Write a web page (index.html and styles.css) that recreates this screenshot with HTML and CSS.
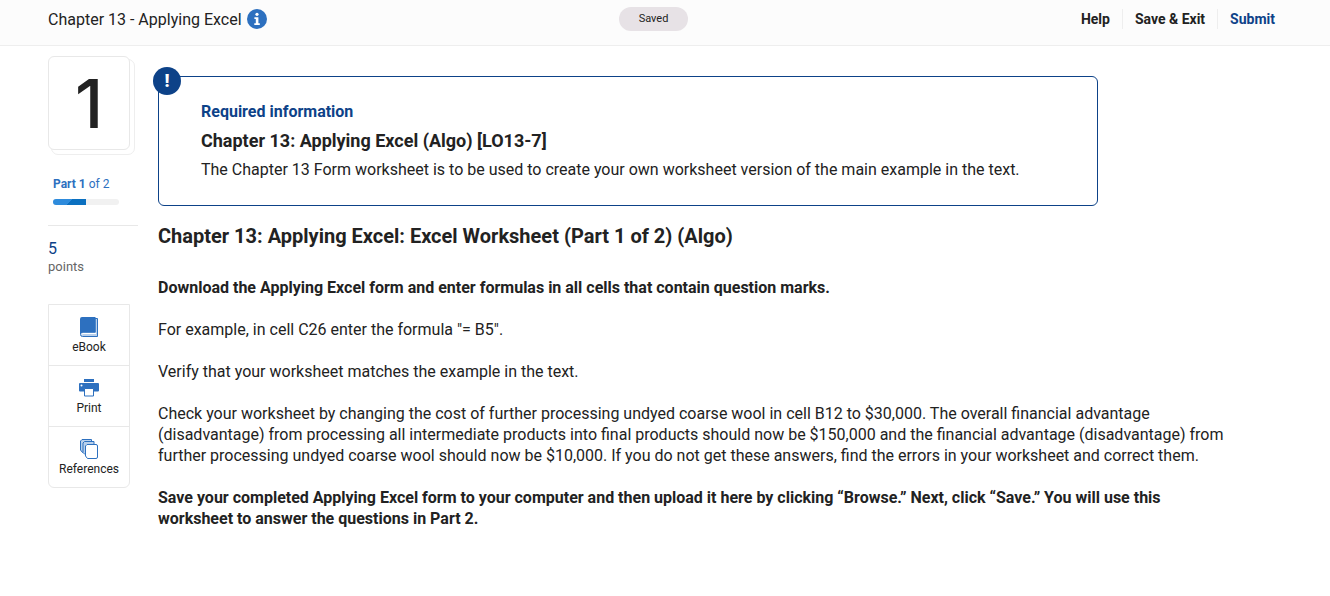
FILE: index.html
```html
<!DOCTYPE html>
<html lang="en">
<head>
  <meta charset="UTF-8">
  <meta name="viewport" content="width=device-width, initial-scale=1">
  <title>Chapter 13 - Applying Excel</title>
  <link rel="stylesheet" href="styles.css">
</head>
<body>

<header class="topbar">
  <div class="topbar-title">
    <span>Chapter 13 - Applying Excel</span>
    <button type="button" class="info-btn" aria-label="Assignment information">
      <svg width="20" height="20" viewBox="0 0 20 20" aria-hidden="true">
        <circle cx="10" cy="10" r="10" fill="#2d70bf"/>
        <circle cx="10" cy="5.3" r="1.6" fill="#fff"/>
        <path d="M7.4 8.2h4v6h1.4v1.8H7.3v-1.800h1.500V10H7.400z" fill="#fff"/>
      </svg>
    </button>
  </div>
  <div class="status">Saved</div>
  <nav class="topbar-actions">
    <button type="button">Help</button>
    <button type="button">Save &amp; Exit</button>
    <button type="button" class="submit">Submit</button>
  </nav>
</header>

<div class="page">
  <aside class="sidebar">
    <div class="question-card"><span class="question-number">1</span></div>

    <div class="part">
      <div class="part-label"><b>Part 1</b> of 2</div>
      <div class="progress"><div class="progress-fill"></div></div>
    </div>

    <div class="points">
      <div class="points-value">5</div>
      <div class="points-label">points</div>
    </div>

    <div class="tools">
      <button type="button">
        <svg width="20" height="20" viewBox="0 0 20 20" aria-hidden="true">
          <path d="M16 1.500h2.500v18H3.500Q1.500 19.500 1.500 17.500V15H16z" fill="#b9d0eb" stroke="#2d70bf"/>
          <path d="M3 0H16.500V15.500H4Q2.500 15.500 1 17V2Q1 0 3 0z" fill="#2d70bf"/>
          <path d="M3 17.500Q3 16.500 4 16.500H17" fill="none" stroke="#fff"/>
        </svg>
        <span>eBook</span>
      </button>
      <button type="button">
        <svg width="20" height="20" viewBox="0 0 20 20" aria-hidden="true">
          <path d="M5 1h10v3H5zM1 5h18q1 0 1 1v6.500q0 1-1 1H1q-1 0-1-1V6q0-1 1-1z" fill="#2d70bf"/>
          <circle cx="2.500" cy="7.500" r="1" fill="#fff"/>
          <path d="M5.500 10.500h9v7.500h-9z" fill="#fff" stroke="#2d70bf"/>
        </svg>
        <span>Print</span>
      </button>
      <button type="button">
        <svg width="20" height="20" viewBox="0 0 20 20" aria-hidden="true">
          <g fill="#b9d0eb" stroke="#2d70bf">
            <path d="M3 .5h9.500v13H3.500L1.500 11V2z"/>
            <path d="M5.500 2.500h9.500v13H6L4 13.500V4z"/>
            <path d="M8 5.500h9q1.500 0 1.500 1.500v11q0 1.500-1.500 1.500H8.500L6.500 17V7z" fill="#fff"/>
          </g>
        </svg>
        <span>References</span>
      </button>
    </div>
  </aside>

  <main class="content">
    <section class="required">
      <span class="required-badge" aria-hidden="true">!</span>
      <h2>Required information</h2>
      <h3>Chapter 13: Applying Excel (Algo) [LO13-7]</h3>
      <p>The Chapter 13 Form worksheet is to be used to create your own worksheet version of the main example in the text.</p>
    </section>

    <h1>Chapter 13: Applying Excel: Excel Worksheet (Part 1 of 2) (Algo)</h1>

    <div class="question">
      <p><b>Download the Applying Excel form and enter formulas in all cells that contain question marks.</b></p>
      <p>For example, in cell C26 enter the formula "= B5".</p>
      <p>Verify that your worksheet matches the example in the text.</p>
      <p>Check your worksheet by changing the cost of further processing undyed coarse wool in cell B12 to $30,000. The overall financial advantage (disadvantage) from processing all intermediate products into final products should now be $150,000 and the financial advantage (disadvantage) from further processing undyed coarse wool should now be $10,000. If you do not get these answers, find the errors in your worksheet and correct them.</p>
      <p><b>Save your completed Applying Excel form to your computer and then upload it here by clicking “Browse.” Next, click “Save.” You will use this worksheet to answer the questions in Part 2.</b></p>
    </div>
  </main>
</div>

</body>
</html>
```

FILE: styles.css
```css
* {
  box-sizing: border-box;
}

body {
  margin: 0;
  font-family: Roboto, "Liberation Sans", sans-serif;
  font-size: 16px;
  line-height: 21px;
  color: #222;
  background: #fff;
}

h1, h2, h3, p {
  margin: 0;
}

button {
  padding: 0;
  border: none;
  background: none;
  font-family: inherit;
  color: inherit;
  cursor: pointer;
}

/* top bar */
.topbar {
  display: grid;
  grid-template-columns: 1fr auto 1fr;
  align-items: center;
  padding: 0 55px 7px 48px;
  min-height: 46px;
  background: #fcfcfc;
  border-bottom: 1px solid #eee;
}

.topbar-title {
  display: flex;
  align-items: center;
  gap: 5px;
}

.info-btn {
  display: flex;
}

.status {
  margin-right: 16px;
  padding: 0 20px;
  border-radius: 12px;
  background: #e7e2e6;
  font-size: 11px;
  line-height: 24px;
}

.topbar-actions {
  display: flex;
  justify-content: flex-end;
}

.topbar-actions button {
  padding: 0 12px;
  border-left: 1px solid #eee;
  font-size: 14px;
  font-weight: 700;
  line-height: 20px;
}

.topbar-actions button:first-child {
  border-left: none;
}

.topbar-actions .submit {
  padding-right: 0;
  color: #0d4288;
}

/* layout */
.page {
  display: flex;
  gap: 20px;
  padding: 10px 95px 40px 48px;
}

.sidebar {
  flex: 0 0 90px;
}

.content {
  flex: 1;
  min-width: 0;
  padding-top: 20px;
}

/* sidebar */
.question-card {
  position: relative;
  width: 82px;
  height: 94px;
  border: 1px solid #e8e8e8;
  border-radius: 6px;
  background: #fff;
  text-align: center;
}

.question-card::after {
  content: "";
  position: absolute;
  top: 2px;
  left: 2px;
  right: -6px;
  bottom: -6px;
  z-index: -1;
  border: 1px solid #eee;
  border-radius: 7px;
}

.question-number {
  font-family: Inter, sans-serif;
  font-size: 68px;
  font-weight: 500;
  line-height: 92px;
}

.part {
  padding: 24px 0 20px 5px;
  border-bottom: 1px solid #e8e8e8;
}

.part-label {
  font-size: 12px;
  color: #2d70bf;
}

.progress {
  width: 66px;
  height: 6px;
  margin-top: 4px;
  border-radius: 3px;
  background: #f1f1f1;
  overflow: hidden;
}

.progress-fill {
  width: 50%;
  height: 100%;
  background: linear-gradient(135deg, #2e8bdc 50%, #0b70c0 50%);
}

.points {
  padding: 14px 0 28px;
}

.points-value {
  color: #0d4288;
  line-height: 18px;
}

.points-label {
  font-size: 13px;
  line-height: 18px;
  color: #666;
}

.tools {
  width: 82px;
  border: 1px solid #e8e8e8;
  border-radius: 0 0 6px 6px;
}

.tools button {
  display: flex;
  flex-direction: column;
  align-items: center;
  gap: 2px;
  width: 100%;
  padding: 12px 0 10px;
  font-size: 12px;
  line-height: 16px;
}

.tools button + button {
  border-top: 1px solid #e8e8e8;
}

/* required information box */
.required {
  position: relative;
  max-width: 940px;
  padding: 24px 42px 25px;
  border: 1px solid #0d4288;
  border-radius: 6px;
}

.required-badge {
  position: absolute;
  top: -10px;
  left: -6px;
  width: 28px;
  height: 28px;
  border-radius: 50%;
  background: #0d4288;
  color: #fff;
  font-size: 18px;
  font-weight: 900;
  line-height: 28px;
  text-align: center;
}

.required h2 {
  font-size: 16px;
  color: #0d4288;
}

.required h3 {
  margin: 8px 0;
  font-size: 18px;
}

/* question text */
h1 {
  margin-top: 20px;
  font-size: 20px;
}

.question {
  display: flex;
  flex-direction: column;
  gap: 21px;
  margin-top: 30px;
}
```
